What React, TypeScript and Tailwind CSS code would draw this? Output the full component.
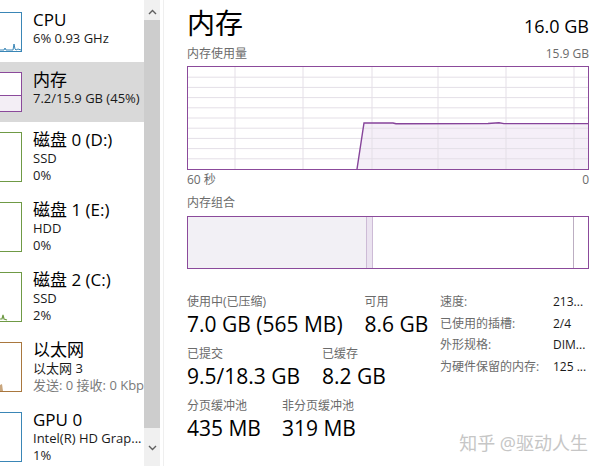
import React from "react";

type Item = {
  title: string;
  lines: { text: string; muted?: boolean }[];
  border: string;
  tall: boolean;
  selected?: boolean;
  art?: React.ReactNode;
};

const items: Item[] = [
  {
    title: "CPU",
    lines: [{ text: "6% 0.93 GHz" }],
    border: "border-[#3a86b6]",
    tall: false,
    art: (
      <svg viewBox="0 0 21 38" className="w-full h-full">
        <path d="M0 37 L4 37 L5 35 L6 37 L13 37 L14 31 L15 36 L16 37 L18 36 L21 37" fill="none" stroke="#3a86b6" strokeWidth="1" />
      </svg>
    ),
  },
  {
    title: "内存",
    lines: [{ text: "7.2/15.9 GB (45%)" }],
    border: "border-[#8b4a9b]",
    tall: false,
    selected: true,
    art: (
      <div className="flex flex-col h-full">
        <div className="h-[22px]" />
        <div className="flex-1 border-t border-[#8b4a9b] bg-[#f3eef5]" />
      </div>
    ),
  },
  {
    title: "磁盘 0 (D:)",
    lines: [{ text: "SSD" }, { text: "0%" }],
    border: "border-[#6f9a45]",
    tall: true,
  },
  {
    title: "磁盘 1 (E:)",
    lines: [{ text: "HDD" }, { text: "0%" }],
    border: "border-[#6f9a45]",
    tall: true,
  },
  {
    title: "磁盘 2 (C:)",
    lines: [{ text: "SSD" }, { text: "2%" }],
    border: "border-[#6f9a45]",
    tall: true,
    art: (
      <svg viewBox="0 0 21 48" className="w-full h-full">
        <path d="M0 46 L2 46 L3 42 L4 46 L7 47" fill="none" stroke="#6f9a45" strokeWidth="1.2" />
      </svg>
    ),
  },
  {
    title: "以太网",
    lines: [{ text: "以太网 3" }, { text: "发送: 0 接收: 0 Kbps", muted: true }],
    border: "border-[#a9773e]",
    tall: true,
    art: (
      <svg viewBox="0 0 21 48" className="w-full h-full">
        <path d="M0 48 L0 42 L2 41 L3 48 Z" fill="#c9a67e" />
      </svg>
    ),
  },
  {
    title: "GPU 0",
    lines: [{ text: "Intel(R) HD Grap..." }, { text: "1%" }],
    border: "border-[#3a86b6]",
    tall: true,
  },
];

function SideItem({ item }: { item: Item }) {
  return (
    <div
      className={
        "flex gap-[11px] pt-[10px] shrink-0 " +
        (item.tall ? "h-[70px] " : "h-[60px] ") +
        (item.selected ? "bg-[#d9d9d9]" : "")
      }
    >
      <div
        className={
          "w-[22px] shrink-0 border-y border-r bg-white overflow-hidden " +
          (item.tall ? "h-[50px] " : "h-[40px] ") +
          item.border
        }
      >
        {item.art}
      </div>
      <div className="-mt-[3px] min-w-0 whitespace-nowrap">
        <div className="text-[17px] leading-[21px] text-black">{item.title}</div>
        {item.lines.map((l) => (
          <div
            key={l.text}
            className={"text-[13px] leading-[17px] " + (l.muted ? "text-[#7a7a7a]" : "text-[#1a1a1a]")}
          >
            {l.text}
          </div>
        ))}
      </div>
    </div>
  );
}

function Chevron({ up }: { up?: boolean }) {
  return (
    <svg width="9" height="6" viewBox="0 0 9 6">
      <polyline
        points={up ? "1,5 4.5,1.5 8,5" : "1,1 4.5,4.5 8,1"}
        fill="none"
        stroke="#5f5f5f"
        strokeWidth="1.4"
      />
    </svg>
  );
}

const hLines = [1, 2, 3, 4, 5, 6, 7, 8, 9].map((i) => i * 10.2);
const vLines = [47, 115, 184, 250, 318, 386];

function UsageChart() {
  return (
    <div className="mt-[4px] h-[104px] border border-[#8b4a9b] bg-white">
      <svg viewBox="0 0 400 102" preserveAspectRatio="none" className="w-full h-full block">
        <polygon points="169,102 176,56 400,56.5 400,102" fill="#f5eff8" />
        {hLines.map((y) => (
          <line key={y} x1="0" x2="400" y1={y} y2={y} stroke="#e4dfe7" strokeWidth="1" />
        ))}
        {vLines.map((x) => (
          <line key={x} x1={x} x2={x} y1="0" y2="102" stroke="#e4dfe7" strokeWidth="1" />
        ))}
        <polyline
          points="169,102 176,56 205,56 208,56.8 300,56.5 311,55.8 316,56.6 400,56.6"
          fill="none"
          stroke="#86449a"
          strokeWidth="1.4"
        />
      </svg>
    </div>
  );
}

function Stat({ label, value }: { label: string; value: string }) {
  return (
    <div className="whitespace-nowrap">
      <div className="text-[12px] leading-[16px] text-[#6b6b6b]">{label}</div>
      <div className="text-[21px] leading-[28px] text-black">{value}</div>
    </div>
  );
}

const specs = [
  ["速度:", "213..."],
  ["已使用的插槽:", "2/4"],
  ["外形规格:", "DIM..."],
  ["为硬件保留的内存:", "125 ..."],
];

export default function App() {
  return (
    <div className="relative w-[600px] h-[466px] bg-white flex overflow-hidden font-['Open_Sans','Noto_Sans_CJK_SC',sans-serif]">
      {/* sidebar */}
      <aside className="w-[144px] shrink-0 flex flex-col pt-[2px] overflow-hidden">
        {items.map((it) => (
          <SideItem key={it.title} item={it} />
        ))}
      </aside>

      {/* scrollbar */}
      <div className="w-[16px] shrink-0 flex flex-col bg-[#f0f0f0] pt-[3px]">
        <div className="h-[17px] flex items-center justify-center">
          <Chevron up />
        </div>
        <div className="h-[408px] bg-[#cdcdcd]" />
        <div className="flex-1 flex justify-center pt-[17px]">
          <Chevron />
        </div>
      </div>
      <div className="w-[3px] shrink-0" />
      <div className="w-px shrink-0 bg-[#efefef]" />

      {/* main */}
      <main className="flex-1 pl-[23px] pr-[11px] pt-[8px] flex flex-col">
        <div className="flex justify-between items-start h-[30px]">
          <h1 className="text-[28px] leading-[30px] text-black">内存</h1>
          <span className="mt-[6px] text-[18px] leading-[24px] text-black">16.0 GB</span>
        </div>

        <div className="mt-[8px] flex justify-between text-[12px] leading-[16px] text-[#6b6b6b]">
          <span>内存使用量</span>
          <span>15.9 GB</span>
        </div>

        <UsageChart />

        <div className="mt-[2px] flex justify-between text-[12px] leading-[16px] text-[#6b6b6b]">
          <span>60 秒</span>
          <span>0</span>
        </div>

        <div className="mt-[7px] text-[12px] leading-[16px] text-[#6b6b6b]">内存组合</div>

        <div className="mt-[5px] h-[53px] border border-[#8b4a9b] flex">
          <div className="w-[178px] bg-[#f2f0f5]" />
          <div className="w-[7px] bg-[#ebe3f0] border-x border-[#cdbbd6]" />
          <div className="flex-1 bg-white" />
          <div className="w-[15px] border-l border-[#bcaec2] bg-white" />
        </div>

        <div className="mt-[22px] flex items-start">
          <div className="flex-1 pt-[3px] flex flex-col gap-[8px]">
            <div className="flex gap-[22px]">
              <Stat label="使用中(已压缩)" value="7.0 GB (565 MB)" />
              <Stat label="可用" value="8.6 GB" />
            </div>
            <div className="flex gap-[22px]">
              <Stat label="已提交" value="9.5/18.3 GB" />
              <Stat label="已缓存" value="8.2 GB" />
            </div>
            <div className="flex gap-[21px]">
              <Stat label="分页缓冲池" value="435 MB" />
              <Stat label="非分页缓冲池" value="319 MB" />
            </div>
          </div>
          <div className="w-[149px] shrink-0 grid grid-cols-[113px_1fr] content-start text-[12px] leading-[21.5px] whitespace-nowrap">
            {specs.map(([k, v]) => (
              <React.Fragment key={k}>
                <span className="text-[#6b6b6b]">{k}</span>
                <span className="text-[#1a1a1a]">{v}</span>
              </React.Fragment>
            ))}
          </div>
        </div>
      </main>

      {/* watermark */}
      <div className="absolute right-[12px] bottom-[12px] text-[18px] leading-[22px] text-[#c6c6c6] [text-shadow:0_0_1px_#ffffff]">
        知乎 @驱动人生
      </div>
    </div>
  );
}
